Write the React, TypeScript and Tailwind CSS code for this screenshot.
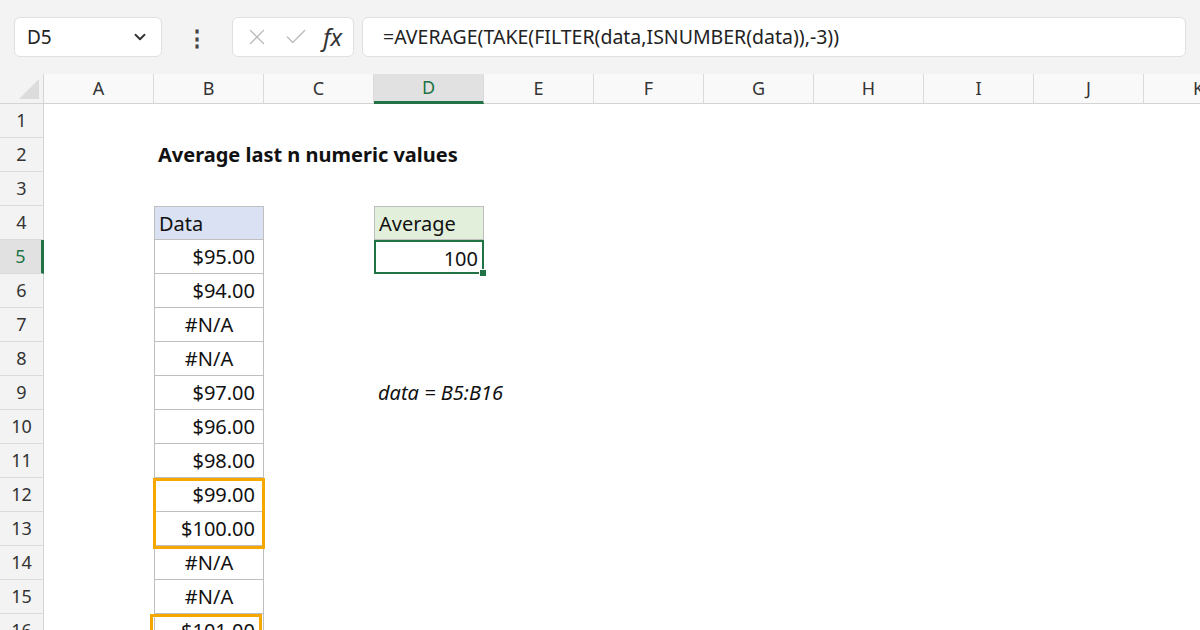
import React from 'react';
import { ChevronDown, X, Check } from 'lucide-react';

const cols = ['A', 'B', 'C', 'D', 'E', 'F', 'G', 'H', 'I', 'J', 'K'];
const rows = Array.from({ length: 16 }, (_, i) => i + 1);

const data: Record<number, string> = {
    5: '$95.00', 6: '$94.00', 7: '#N/A', 8: '#N/A', 9: '$97.00', 10: '$96.00',
    11: '$98.00', 12: '$99.00', 13: '$100.00', 14: '#N/A', 15: '#N/A', 16: '$101.00',
};

function Cell({ r, c }: { r: number; c: string }) {
    const base = 'h-[34px] text-[20px] text-[#111] leading-[34px] whitespace-nowrap';
    if (c === 'B' && r === 2) {
        return <div className={`${base} font-bold text-[19.5px] pl-1 overflow-visible relative z-10`}>Average last n numeric values</div>;
    }
    if (c === 'B' && r === 4) {
        return <div className={`${base} bg-[#d9e1f2] border border-[#bfbfbf] pl-1`}>Data</div>;
    }
    if (c === 'B' && data[r]) {
        const na = data[r] === '#N/A';
        return (
            <div className={`${base} border border-t-0 border-[#bfbfbf] ${na ? 'text-center' : 'text-right pr-2'}`}>
                {data[r]}
            </div>
        );
    }
    if (c === 'D' && r === 4) {
        return <div className={`${base} bg-[#e2efda] border border-[#bfbfbf] pl-1`}>Average</div>;
    }
    if (c === 'D' && r === 5) {
        return (
            <div className={`${base} relative border-2 border-[#217346] text-right pr-1 leading-[30px]`}>
                100
                <div className="absolute -right-[5px] -bottom-[5px] w-[8px] h-[8px] bg-[#217346] border border-white" />
            </div>
        );
    }
    if (c === 'D' && r === 9) {
        return <div className={`${base} italic pl-1 relative z-10`}>data = B5:B16</div>;
    }
    return <div className="h-[34px]" />;
}

export default function App() {
    return (
        <div className="w-[1200px] h-[630px] overflow-hidden bg-white font-['Open_Sans',sans-serif] relative">
            {/* Toolbar */}
            <div className="h-[74px] bg-[#f3f3f3] flex items-center gap-2 px-[14px]">
                <div className="w-[148px] h-[40px] bg-white border border-[#e0e0e0] rounded-md flex items-center justify-between px-3">
                    <span className="text-[19px] text-[#222]">D5</span>
                    <ChevronDown size={18} strokeWidth={2.5} className="text-[#333]" />
                </div>
                <div className="w-[54px] flex justify-center text-[22px] font-bold text-[#444]">⋮</div>
                <div className="w-[122px] h-[40px] bg-white border border-[#e0e0e0] rounded-md flex items-center justify-around px-1">
                    <X size={26} strokeWidth={1.2} className="text-[#bbb]" />
                    <Check size={26} strokeWidth={1.2} className="text-[#bbb]" />
                    <span className="font-['Liberation_Serif',serif] italic text-[24px] text-[#333]">fx</span>
                </div>
                <div className="flex-1 h-[40px] bg-white border border-[#e0e0e0] rounded-md flex items-center px-5 text-[19.5px] text-[#222]">
                    =AVERAGE(TAKE(FILTER(data,ISNUMBER(data)),-3))
                </div>
            </div>

            {/* Sheet */}
            <div className="grid grid-cols-[44px_repeat(11,110px)]">
                <div className="h-[30px] bg-[#f3f3f3] border-b border-r border-[#d4d4d4] relative">
                    <div className="absolute right-[4px] bottom-[4px] w-0 h-0 border-l-[20px] border-l-transparent border-b-[20px] border-b-[#dcdcdc]" />
                </div>
                {cols.map(c => (
                    <div
                        key={c}
                        className={`h-[30px] flex items-center justify-center text-[18px] border-r border-[#dadada] ${c === 'D' ? 'bg-[#e1e1e1] text-[#217346] border-b-[3px] border-b-[#217346]' : 'bg-[#f9f9f9] text-[#333] border-b border-b-[#d4d4d4]'}`}
                    >
                        {c}
                    </div>
                ))}
                {rows.map(r => (
                    <React.Fragment key={r}>
                        <div
                            className={`h-[34px] flex items-center justify-center text-[18px] border-b border-[#dadada] ${r === 5 ? 'bg-[#e1e1e1] text-[#217346] border-r-[3px] border-r-[#217346]' : 'bg-[#f3f3f3] text-[#333] border-r border-r-[#d4d4d4]'}`}
                        >
                            {r}
                        </div>
                        {cols.map(c => <Cell key={c} r={r} c={c} />)}
                    </React.Fragment>
                ))}
            </div>

            {/* Highlights */}
            <div className="absolute left-[153px] top-[478px] w-[112px] h-[71px] border-[3px] border-[#f5a800]" />
            <div className="absolute left-[150px] top-[614px] w-[112px] h-[40px] border-[3px] border-[#f5a800]" />
        </div>
    );
}
